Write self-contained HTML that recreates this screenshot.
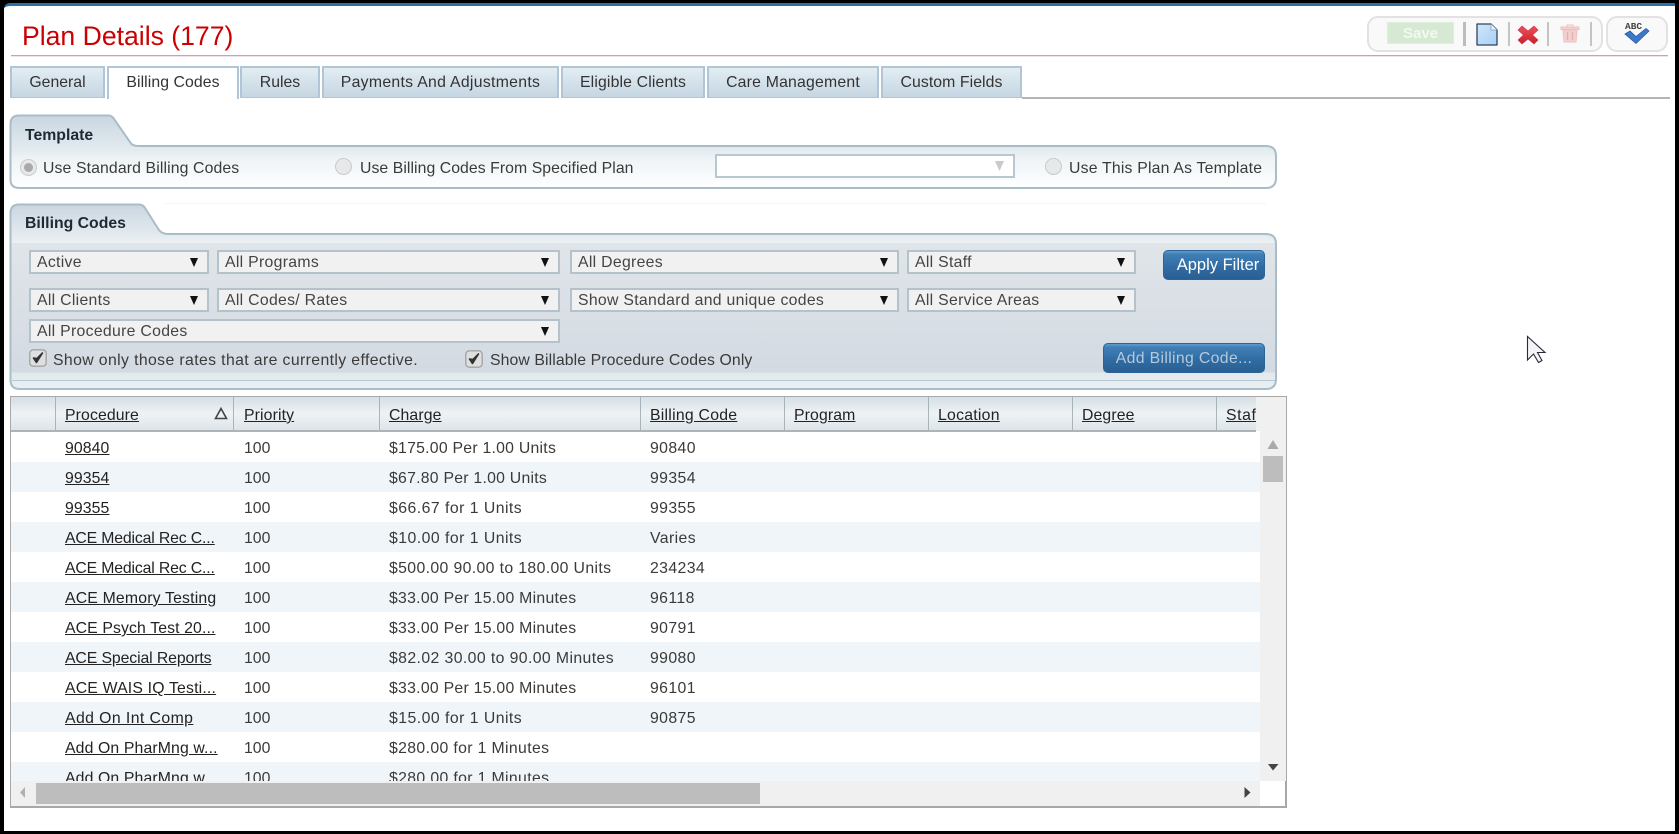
<!DOCTYPE html>
<html><head><meta charset="utf-8"><title>Plan Details</title>
<style>
html,body{margin:0;padding:0;background:#000;}
#p{position:relative;width:1679px;height:834px;overflow:hidden;background:#000;font-family:"Liberation Sans",sans-serif;font-size:15.8px;color:#3a3a3a;}
#w{position:absolute;left:4px;top:3px;width:1671px;height:828px;background:#fff;border-top:3px solid #2f6fa8;box-sizing:border-box;border-top-left-radius:6px;}
.a{position:absolute;box-sizing:border-box;}
.t{position:absolute;white-space:nowrap;line-height:20px;height:20px;}
.tab{position:absolute;top:66px;height:32px;box-sizing:border-box;border:2px solid #b0c6d6;border-bottom-width:1px;background:linear-gradient(#e3edf3,#c6d6e2);text-align:center;line-height:29px;color:#333;white-space:nowrap;}
.tab.on{background:#fff;height:33px;border-bottom:0;color:#333;}
.sel{position:absolute;box-sizing:border-box;height:24px;background:#f1f1f1;border:2px solid #b4c2cb;line-height:22px;padding-left:6px;color:#444;white-space:nowrap;letter-spacing:.3px;}
.sel i{position:absolute;right:9px;top:6px;width:0;height:0;border-left:4px solid transparent;border-right:4px solid transparent;border-top:9px solid #111;}
.btn{position:absolute;box-sizing:border-box;border:1px solid #2c6496;border-radius:5px;background:linear-gradient(#5f9ccf 0,#3f7fb6 12%,#2f6ba3 60%,#2a5f92 100%);text-align:center;white-space:nowrap;}
.r{position:absolute;left:11px;width:1249px;height:30px;overflow:hidden;}
.r.o{background:#eff5f9;}
.r span{position:absolute;top:7px;line-height:20px;white-space:nowrap;color:#3a3a3a;letter-spacing:.3px;}
.r span.n{letter-spacing:0;}
.r span.b{left:639px;letter-spacing:.4px;}
.r span.l{color:#222;text-decoration:underline;left:54px;letter-spacing:.1px;}
.h{position:absolute;top:406px;line-height:20px;color:#222;text-decoration:underline;white-space:nowrap;letter-spacing:.12px;}
.hs{position:absolute;top:397px;width:1px;height:33px;background:#a9b3ba;}
.rd{position:absolute;width:17px;height:17px;box-sizing:border-box;border-radius:50%;border:1px solid #c8cccf;background:#e6e8ea;}
</style></head>
<body><div id="p">
<div id="w"></div>

<div class="t" style="left:22px;top:20px;height:32px;line-height:32px;font-size:26.6px;color:#cc0000;">Plan Details (177)</div>
<div class="a" style="left:11px;top:55px;width:1657px;height:1px;background:#c9a4a9;"></div>
<div class="a" style="left:11px;top:56px;width:1657px;height:1px;background:#f2e4e4;"></div>

<!-- toolbar -->
<div class="a" style="left:1367px;top:16px;width:236px;height:36px;border:2px solid #e2e2e2;border-radius:11px;background:#f9f9f9;"></div>
<div class="a" style="left:1606px;top:16px;width:62px;height:36px;border:2px solid #e2e2e2;border-radius:11px;background:#f9f9f9;"></div>
<div class="a" style="left:1387px;top:22px;width:67px;height:22px;background:#d6e9d2;border:1px solid #dfeedd;text-align:center;line-height:21px;color:#f2f9f0;font-weight:bold;font-size:15px;">Save</div>
<div class="a" style="left:1463px;top:22px;width:3px;height:24px;background:#bdbdbd;"></div>
<div class="a" style="left:1508px;top:22px;width:2px;height:24px;background:#c4c4c4;"></div>
<div class="a" style="left:1547px;top:22px;width:2px;height:24px;background:#c4c4c4;"></div>
<div class="a" style="left:1590px;top:22px;width:2px;height:24px;background:#c4c4c4;"></div>
<svg class="a" style="left:0;top:0;" width="1679" height="834" viewBox="0 0 1679 834">
<defs>
<linearGradient id="doc" x1="0" y1="0" x2="1" y2="1"><stop offset="0" stop-color="#cfe6fb"/><stop offset="1" stop-color="#a9d0f4"/></linearGradient>
<linearGradient id="g1" gradientUnits="userSpaceOnUse" x1="0" y1="115" x2="0" y2="188"><stop offset="0" stop-color="#c9d6df"/><stop offset=".42" stop-color="#dfe8ed"/><stop offset=".6" stop-color="#eef3f6"/><stop offset="1" stop-color="#ffffff"/></linearGradient>
<linearGradient id="g2" gradientUnits="userSpaceOnUse" x1="0" y1="204" x2="0" y2="389"><stop offset="0" stop-color="#c9d6df"/><stop offset=".162" stop-color="#e3eaef"/><stop offset=".21" stop-color="#ebf0f3"/><stop offset=".211" stop-color="#e0e5e9"/><stop offset=".91" stop-color="#d3dae2"/><stop offset=".911" stop-color="#e1e8ec"/><stop offset="1" stop-color="#eaf0f3"/></linearGradient>
<linearGradient id="x" x1="0" y1="0" x2="0" y2="1"><stop offset="0" stop-color="#f0505a"/><stop offset="1" stop-color="#c8202c"/></linearGradient>
</defs>
<!-- doc icon -->
<path d="M1477,24 H1491 L1497,30 V45 H1477 Z" fill="url(#doc)" stroke="#2c4560" stroke-width="1.3" stroke-linejoin="round"/>
<path d="M1491,24 V30 H1497" fill="#eef6fd" stroke="#7f9db8" stroke-width=".8"/>
<!-- red X -->
<path d="M1522,26 L1528,31 L1534,26 L1538,30 L1532.5,35 L1538,40 L1534,44 L1528,39 L1522,44 L1518,40 L1523.5,35 L1518,30 Z" fill="url(#x)" stroke="#d23039" stroke-width=".6"/>
<!-- trash -->
<g fill="#f3d0d0" stroke="#eec0c0" stroke-width="1">
<path d="M1561,27 H1579 V29.5 H1561 Z"/><path d="M1567,27 V25 H1573 V27" fill="none"/>
<path d="M1563,30 H1577 L1576,42 H1564 Z"/>
</g>
<path d="M1567.5,32 V40 M1572.5,32 V40" stroke="#e4b0b0" stroke-width="1.4"/>
<!-- check -->
<path d="M1625,34 L1630,31 L1636,36.5 L1646,28.5 L1649,31 L1636,43.5 Z" fill="#3c78c8" stroke="#2a5ba6" stroke-width=".8"/>
<!-- template panel -->
<path d="M10.5,180 V124 Q10.5,115.5 19,115.5 H108 Q112,115.5 114,119 L130,142 Q132,146 138,146 H1266 Q1276,146 1276,156 V178 Q1276,188 1266,188 H20 Q10.5,188 10.5,180 Z" fill="url(#g1)" stroke="#a9bdc9" stroke-width="2"/>
<line x1="165" y1="203.5" x2="1266" y2="203.5" stroke="#f4f4f4"/>
<!-- billing panel -->
<path d="M10.5,380 V213 Q10.5,204.5 19,204.5 H139 Q143,204.5 145,208 L159,230 Q162,234 168,234 H1266 Q1276,234 1276,244 V379 Q1276,389 1266,389 H20 Q10.5,389 10.5,380 Z" fill="url(#g2)" stroke="#a9bdc9" stroke-width="2"/>
<line x1="12" y1="380.5" x2="1275" y2="380.5" stroke="#b6c7d1"/>
</svg>
<div class="t" style="left:1625px;top:22px;height:10px;line-height:10px;font-size:9.5px;font-family:'Liberation Mono',monospace;font-weight:bold;color:#444;">ABC</div>

<!-- tabs -->
<div class="tab" style="left:10px;width:95px;">General</div>
<div class="tab on" style="left:107px;width:132px;letter-spacing:.08px;">Billing Codes</div>
<div class="tab" style="left:240px;width:80px;">Rules</div>
<div class="tab" style="left:322px;width:237px;letter-spacing:.3px;">Payments And Adjustments</div>
<div class="tab" style="left:561px;width:144px;letter-spacing:.15px;">Eligible Clients</div>
<div class="tab" style="left:707px;width:172px;letter-spacing:.2px;">Care Management</div>
<div class="tab" style="left:881px;width:141px;letter-spacing:.08px;">Custom Fields</div>
<div class="a" style="left:1022px;top:97px;width:648px;height:2px;background:#b2b6ba;"></div>

<!-- template -->
<div class="t" style="left:25px;top:126px;font-weight:bold;color:#1c2a36;">Template</div>
<div class="rd" style="left:20px;top:159px;"></div>
<div class="a" style="left:24px;top:163px;width:9px;height:9px;border-radius:50%;background:#a9a9a9;"></div>
<div class="t" style="left:43px;top:159px;letter-spacing:.12px;">Use Standard Billing Codes</div>
<div class="rd" style="left:335px;top:158px;"></div>
<div class="t" style="left:360px;top:159px;letter-spacing:.06px;">Use Billing Codes From Specified Plan</div>
<div class="a" style="left:715px;top:154px;width:300px;height:24px;background:#fff;border:2px solid #b8c8d2;"></div>
<svg class="a" style="left:990px;top:158px;" width="20" height="16" viewBox="0 0 20 16"><path d="M5,3 H14 L9.5,13 Z" fill="#cfc8c8"/></svg>
<div class="rd" style="left:1045px;top:158px;"></div>
<div class="t" style="left:1069px;top:159px;letter-spacing:.2px;">Use This Plan As Template</div>

<!-- billing codes -->
<div class="t" style="left:25px;top:214px;font-weight:bold;color:#1c2a36;">Billing Codes</div>
<div class="sel" style="left:29px;top:250px;width:180px;">Active<i></i></div>
<div class="sel" style="left:217px;top:250px;width:343px;">All Programs<i></i></div>
<div class="sel" style="left:570px;top:250px;width:329px;">All Degrees<i></i></div>
<div class="sel" style="left:907px;top:250px;width:229px;">All Staff<i></i></div>
<div class="sel" style="left:29px;top:288px;width:180px;">All Clients<i></i></div>
<div class="sel" style="left:217px;top:288px;width:343px;">All Codes/ Rates<i></i></div>
<div class="sel" style="left:570px;top:288px;width:329px;">Show Standard and unique codes<i></i></div>
<div class="sel" style="left:907px;top:288px;width:229px;">All Service Areas<i></i></div>
<div class="sel" style="left:29px;top:319px;width:531px;">All Procedure Codes<i></i></div>

<svg class="a" style="left:29px;top:349px;" width="18" height="18" viewBox="0 0 18 18"><rect x=".8" y=".8" width="16.4" height="16.4" rx="3.5" fill="#dedfe1" stroke="#a4a4a4" stroke-width="1.4"/><path d="M4.5,9 L7.5,13.5 L13.5,4 L8,9.5 Z" fill="#333" stroke="#333" stroke-width="1.6" stroke-linejoin="round"/></svg>
<div class="t" style="left:53px;top:351px;letter-spacing:.38px;">Show only those rates that are currently effective.</div>
<svg class="a" style="left:465px;top:350px;" width="18" height="18" viewBox="0 0 18 18"><rect x=".8" y=".8" width="16.4" height="16.4" rx="3.5" fill="#dedfe1" stroke="#a4a4a4" stroke-width="1.4"/><path d="M4.5,9 L7.5,13.5 L13.5,4 L8,9.5 Z" fill="#333" stroke="#333" stroke-width="1.6" stroke-linejoin="round"/></svg>
<div class="t" style="left:490px;top:351px;letter-spacing:.1px;">Show Billable Procedure Codes Only</div>

<div class="btn" style="left:1163px;top:250px;width:102px;height:30px;line-height:29px;color:#fff;font-size:16.5px;padding-left:8px;">Apply Filter</div>
<div class="btn" style="left:1103px;top:343px;width:162px;height:30px;line-height:29px;color:#b5c9db;letter-spacing:.35px;">Add Billing Code...</div>

<!-- grid -->
<div class="a" style="left:10px;top:396px;width:1277px;height:412px;border:2px solid #a8a8a8;background:#fff;border-top-width:1px;border-left-width:1px;"></div>
<div class="a" style="left:1256px;top:397px;width:30px;height:34px;background:#f0f0f0;"></div>
<div class="a" style="left:1260px;top:431px;width:26px;height:350px;background:#f0f0f0;"></div>
<div class="a" style="left:11px;top:397px;width:1245px;height:33px;background:linear-gradient(#d5dfe5 0,#eef2f5 50%,#dde5ea 100%);"></div>
<div class="a" style="left:11px;top:430px;width:1245px;height:2px;background:#adb3b7;"></div>
<div class="hs" style="left:55px;"></div><div class="hs" style="left:233px;"></div><div class="hs" style="left:379px;"></div><div class="hs" style="left:640px;"></div><div class="hs" style="left:784px;"></div><div class="hs" style="left:928px;"></div><div class="hs" style="left:1072px;"></div><div class="hs" style="left:1216px;"></div>
<div class="h" style="left:65px;">Procedure</div>
<svg class="a" style="left:214px;top:407px;" width="14" height="13" viewBox="0 0 14 13"><path d="M7,1.5 L12.5,11.5 H1.5 Z" fill="none" stroke="#444" stroke-width="1.6"/></svg>
<div class="h" style="left:244px;">Priority</div>
<div class="h" style="left:389px;">Charge</div>
<div class="h" style="left:650px;letter-spacing:.25px;">Billing Code</div>
<div class="h" style="left:794px;">Program</div>
<div class="h" style="left:938px;letter-spacing:.25px;">Location</div>
<div class="h" style="left:1082px;">Degree</div>
<div class="a" style="left:1226px;top:405px;width:30px;height:24px;overflow:hidden;"><div class="h" style="left:0;top:1px;letter-spacing:.6px;">Staff</div></div>

<div class="r" style="top:432px;"><span class="l">90840</span><span class="n" style="left:233px;">100</span><span style="left:378px;letter-spacing:.25px;">$175.00 Per 1.00 Units</span><span class="b">90840</span></div>
<div class="r o" style="top:462px;"><span class="l">99354</span><span class="n" style="left:233px;">100</span><span style="left:378px;letter-spacing:.25px;">$67.80 Per 1.00 Units</span><span class="b">99354</span></div>
<div class="r" style="top:492px;"><span class="l">99355</span><span class="n" style="left:233px;">100</span><span style="left:378px;letter-spacing:.47px;">$66.67 for 1 Units</span><span class="b">99355</span></div>
<div class="r o" style="top:522px;"><span class="l" style="letter-spacing:-.15px;">ACE Medical Rec C...</span><span class="n" style="left:233px;">100</span><span style="left:378px;letter-spacing:.47px;">$10.00 for 1 Units</span><span class="b">Varies</span></div>
<div class="r" style="top:552px;"><span class="l" style="letter-spacing:-.15px;">ACE Medical Rec C...</span><span class="n" style="left:233px;">100</span><span style="left:378px;letter-spacing:.37px;">$500.00 90.00 to 180.00 Units</span><span class="b">234234</span></div>
<div class="r o" style="top:582px;"><span class="l" style="letter-spacing:.18px;">ACE Memory Testing</span><span class="n" style="left:233px;">100</span><span style="left:378px;letter-spacing:.27px;">$33.00 Per 15.00 Minutes</span><span class="b">96118</span></div>
<div class="r" style="top:612px;"><span class="l" style="letter-spacing:.12px;">ACE Psych Test 20...</span><span class="n" style="left:233px;">100</span><span style="left:378px;letter-spacing:.27px;">$33.00 Per 15.00 Minutes</span><span class="b">90791</span></div>
<div class="r o" style="top:642px;"><span class="l" style="letter-spacing:-.1px;">ACE Special Reports</span><span class="n" style="left:233px;">100</span><span style="left:378px;letter-spacing:.4px;">$82.02 30.00 to 90.00 Minutes</span><span class="b">99080</span></div>
<div class="r" style="top:672px;"><span class="l" style="letter-spacing:.18px;">ACE WAIS IQ Testi...</span><span class="n" style="left:233px;">100</span><span style="left:378px;letter-spacing:.27px;">$33.00 Per 15.00 Minutes</span><span class="b">96101</span></div>
<div class="r o" style="top:702px;"><span class="l" style="letter-spacing:.42px;">Add On Int Comp</span><span class="n" style="left:233px;">100</span><span style="left:378px;letter-spacing:.47px;">$15.00 for 1 Units</span><span class="b">90875</span></div>
<div class="r" style="top:732px;"><span class="l" style="letter-spacing:.13px;">Add On PharMng w...</span><span class="n" style="left:233px;">100</span><span style="left:378px;letter-spacing:.36px;">$280.00 for 1 Minutes</span></div>
<div class="r o" style="top:762px;height:19px;"><span class="l" style="letter-spacing:.13px;">Add On PharMng w...</span><span class="n" style="left:233px;">100</span><span style="left:378px;letter-spacing:.36px;">$280.00 for 1 Minutes</span></div>

<!-- scrollbars -->
<div class="a" style="left:11px;top:781px;width:1249px;height:25px;background:#f0f0f0;"></div>
<div class="a" style="left:36px;top:783px;width:724px;height:21px;background:#bdbdbd;"></div>
<div class="a" style="left:1263px;top:456px;width:20px;height:26px;background:#bdbdbd;"></div>
<svg class="a" style="left:0;top:0;" width="1679" height="834" viewBox="0 0 1679 834">
<path d="M1273,440 L1278.5,449 H1267.5 Z" fill="#a9a9a9"/>
<path d="M1268,764 H1278.5 L1273,770.5 Z" fill="#444"/>
<path d="M25,787 V798 L20,792.5 Z" fill="#b0b0b0"/>
<path d="M1244.5,787 V798 L1250.5,792.5 Z" fill="#444"/>
<!-- cursor -->
<path d="M1527.5,336.5 V360 L1533.5,354 L1538.5,362.5 L1542,360.5 L1537.5,352.5 L1545,352.5 Z" fill="#f4f4f6" stroke="#2a2a3a" stroke-width="1.1"/>
</svg>
</div></body></html>
